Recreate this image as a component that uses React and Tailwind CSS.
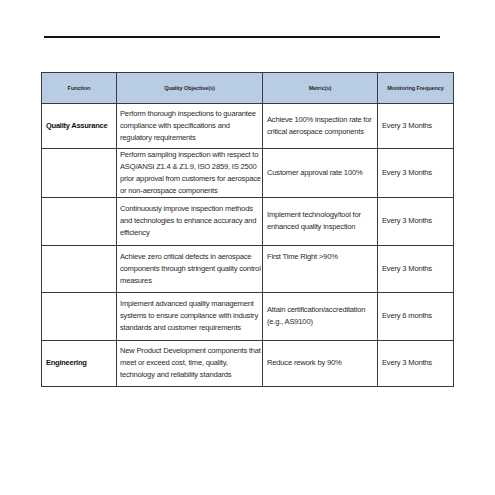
const rows = [
  {
    fn: 'Quality Assurance',
    objective: ['Perform thorough inspections to guarantee', 'compliance with specifications and', 'regulatory requirements'],
    metric: ['Achieve 100% inspection rate for', 'critical aerospace components'],
    freq: 'Every 3 Months',
    h: 'h-[45px]',
  },
  {
    fn: '',
    objective: [
      'Perform sampling inspection with respect to',
      'ASQ/ANSI Z1.4 & Z1.9, ISO 2859, IS 2500',
      'prior approval from customers for aerospace',
      'or non-aerospace components',
    ],
    metric: ['Customer approval rate 100%'],
    freq: 'Every 3 Months',
    h: 'h-[49px]',
  },
  {
    fn: '',
    objective: ['Continuously improve inspection methods', 'and technologies to enhance accuracy and', 'efficiency'],
    metric: ['Implement technology/tool for', 'enhanced quality inspection'],
    freq: 'Every 3 Months',
    h: 'h-[48px]',
  },
  {
    fn: '',
    objective: ['Achieve zero critical defects in aerospace', 'components through stringent quality control', 'measures'],
    metric: ['First Time Right >90%'],
    freq: 'Every 3 Months',
    h: 'h-[47px]',
    metricTop: true,
  },
  {
    fn: '',
    objective: ['Implement advanced quality management', 'systems to ensure compliance with industry', 'standards and customer requirements'],
    metric: ['Attain certification/accreditation', '(e.g., AS9100)'],
    freq: 'Every 6 months',
    h: 'h-[48px]',
  },
  {
    fn: 'Engineering',
    objective: ['New Product Development components that', 'meet or exceed cost, time, quality,', 'technology and reliability standards'],
    metric: ['Reduce rework by 90%'],
    freq: 'Every 3 Months',
    h: 'h-[46px]',
  },
]

const cell = 'border border-[#3a3a3a] px-[4px] text-left whitespace-nowrap overflow-hidden'

const Lines = ({ lines }) =>
  lines.map((l, i) => (
    <div key={i}>{l}</div>
  ))

export default function App() {
  return (
    <div className="w-[495px] h-[495px] bg-white font-['Liberation_Sans',Arial,sans-serif] text-[#2a2a2a]">
      {/* rule above the table */}
      <div className="pt-[36px] pl-[44px]">
        <div className="w-[396px] h-[1.5px] bg-[#111]"></div>
      </div>

      <div className="pt-[34px] pl-[41px]">
        <table className="table-fixed border-collapse w-[412px] text-[7.6px] tracking-[-0.2px] leading-[12px]">
          <colgroup>
            <col className="w-[75px]" />
            <col className="w-[146px]" />
            <col className="w-[115px]" />
            <col className="w-[76px]" />
          </colgroup>
          <thead>
            <tr className="h-[31px] bg-[#b8cce4] text-[5.6px] font-bold tracking-[-0.1px]">
              <th className="border border-[#3a3a3a] text-center">Function</th>
              <th className="border border-[#3a3a3a] text-center">Quality Objective(s)</th>
              <th className="border border-[#3a3a3a] text-center">Metric(s)</th>
              <th className="border border-[#3a3a3a] text-center">Monitoring Frequency</th>
            </tr>
          </thead>
          <tbody>
            {rows.map((r, i) => (
              <tr key={i} className={r.h}>
                <td className={`${cell} align-middle font-bold text-[7.5px] tracking-[-0.25px] text-[#111]`}>{r.fn}</td>
                <td className={`${cell} pl-[3px] pr-0 align-middle`}>
                  <Lines lines={r.objective} />
                </td>
                <td className={`${cell} ${r.metricTop ? 'align-top pt-[5px]' : 'align-middle'}`}>
                  <Lines lines={r.metric} />
                </td>
                <td className={`${cell} align-middle`}>{r.freq}</td>
              </tr>
            ))}
          </tbody>
        </table>
      </div>
    </div>
  )
}
